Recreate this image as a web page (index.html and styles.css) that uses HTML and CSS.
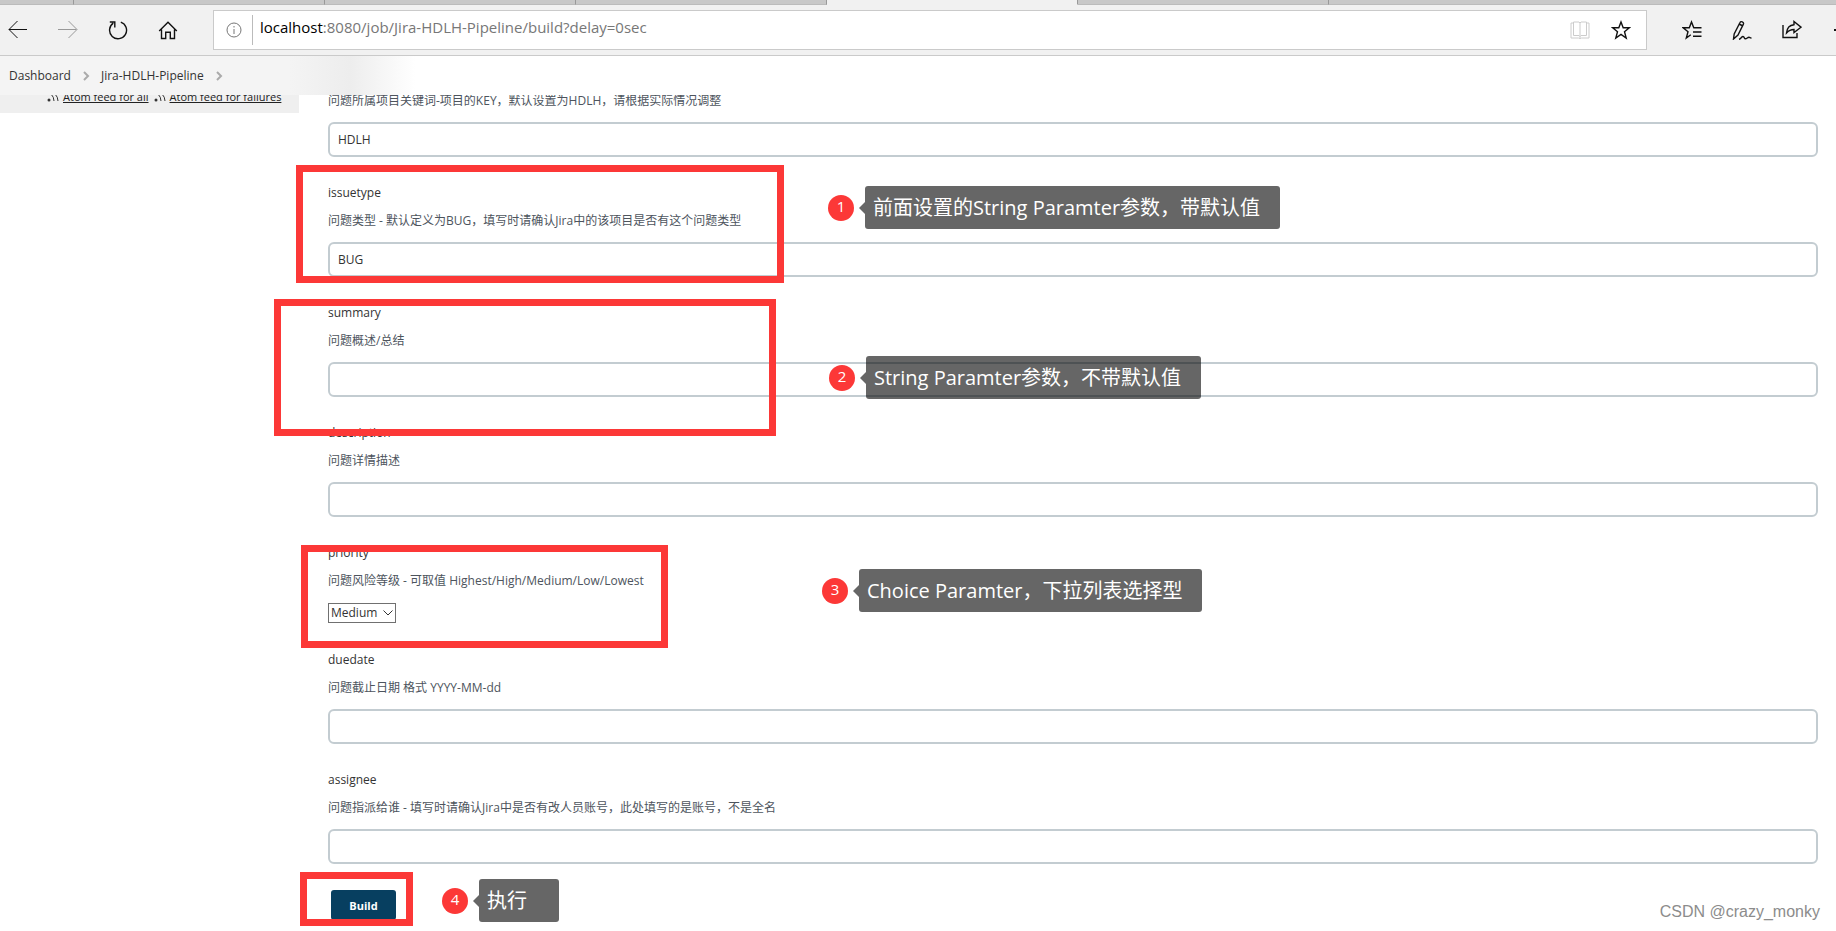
FILE: index.html
```html
<!DOCTYPE html>
<html lang="zh-CN">
<head>
  <meta charset="utf-8">
  <title>Jira-HDLH-Pipeline</title>
  <link rel="stylesheet" href="styles.css">
</head>
<body>

<div class="tabs">
  <div class="tab first"></div>
  <div class="tab"></div>
  <div class="tab"></div>
  <div class="tab"></div>
  <div class="tab active"></div>
  <div class="tab"></div>
  <div class="tab last"></div>
</div>

<div class="toolbar">
  <div class="tools">
    <button aria-label="Back"><svg viewBox="0 0 20 20"><path d="M19 9.5H1M9.5 1L1 9.5 9.500 18"/></svg></button>
    <button class="muted" aria-label="Forward"><svg viewBox="0 0 20 20"><path d="M0 9.5h18.5M10.5 1L19 9.5 10.5 18"/></svg></button>
    <button aria-label="Refresh"><svg viewBox="0 0 20 20"><path class="bold" d="M12.8 2.2A8.5 8.5 0 1 1 5.3 3.2M1.8 2h5v5.500"/></svg></button>
    <button aria-label="Home"><svg viewBox="0 0 20 20"><path class="bold" d="M1.200 11L10 2.200l8.800 8.800M3.500 9.500v9h4.200v-6.300h4.600v6.300h4.200v-9"/></svg></button>
  </div>
  <div class="address">
    <svg class="info" viewBox="0 0 16 16"><circle cx="8" cy="8" r="7"/><path d="M8 7v5M8 4v1.500"/></svg>
    <div class="url" role="textbox" contenteditable="true" spellcheck="false" aria-label="Address"><span class="host">localhost</span>:8080/job/Jira-HDLH-Pipeline/build?delay=0sec</div>
    <button class="reader" aria-label="Reading view"><svg viewBox="0 0 20 20"><path d="M1 3h2.500V2H9l1 1 1-1h5.500v1H19v15h-7.500l-1.500.6-1.500-.6H1zM3.500 3v12.500H9l1 1 1-1h5.500V3M10 3v15"/></svg></button>
    <button aria-label="Favorite"><svg viewBox="0 0 20 20"><path class="bold" d="M10 2l2.200 5.800h6.100l-4.800 3.900 1.700 6.300L10 14.400 4.800 18l1.700-6.300-4.800-3.900h6.100z"/></svg></button>
  </div>
  <div class="tools right">
    <button aria-label="Hub"><svg viewBox="0 0 20 20"><path class="bold" d="M12 8l-.2-.2L9.500 2 7.300 7.800H1.200L6 11.700 4.300 18l4.500-3.300M11.500 7.800h8M11 12h8.500M11 16.200h8.500"/></svg></button>
    <button aria-label="Notes"><svg viewBox="0 0 20 20"><path class="bold" d="M1.500 19l.7-5L8 2.500c.8-1.800 4.200-.4 3.400 1.600L6 15zM7 4l4 2M1.500 19L6 15M7 19.300c2-.5 2.500-2.800 4-2.800 1.700 0 .8 2.300 2.500 2.300 1.500 0 2-1.500 3.500-1.500 1 0 1 .8 2.500.6"/></svg></button>
    <button aria-label="Share"><svg viewBox="0 0 20 20"><path class="bold" d="M1 5v12.500h14V13M12 1.500L19 7.200l-7 5.300V9.500c-3.500 0-5.300 1-7.500 3.500C5 8 7.500 5 12 4.700z"/></svg></button>
    <button aria-label="More"><svg viewBox="0 0 20 20"><path class="dots" d="M2 9h2v2H2zM9 9h2v2H9zM16 9h2v2h-2z"/></svg></button>
  </div>
</div>

<nav class="breadcrumbs">
  <a href="#">Dashboard</a>
  <svg viewBox="0 0 8 10"><path d="M2 1l4 4-4 4"/></svg>
  <a href="#">Jira-HDLH-Pipeline</a>
  <svg viewBox="0 0 8 10"><path d="M2 1l4 4-4 4"/></svg>
</nav>

<div class="content">
  <aside class="sidebar">
    <div class="feeds">
      <svg viewBox="0 0 12 12"><circle cx="2" cy="9" r="1.500"/><path d="M4 3q3 3 3 7M8 3q3 3 3 7"/></svg>
      <a href="#">Atom feed for all</a>
      <svg viewBox="0 0 12 12"><circle cx="2" cy="9" r="1.500"/><path d="M4 3q3 3 3 7M8 3q3 3 3 7"/></svg>
      <a href="#">Atom feed for failures</a>
    </div>
  </aside>

  <main class="params">
    <form>
      <div class="field">
        <p class="help" id="help-project">问题所属项目关键词-项目的KEY，默认设置为HDLH，请根据实际情况调整</p>
        <input type="text" value="HDLH" aria-labelledby="help-project">
      </div>
      <div class="field">
        <label for="issuetype">issuetype</label>
        <p class="help">问题类型 - 默认定义为BUG，填写时请确认Jira中的该项目是否有这个问题类型</p>
        <input type="text" id="issuetype" value="BUG">
      </div>
      <div class="field">
        <label for="summary">summary</label>
        <p class="help">问题概述/总结</p>
        <input type="text" id="summary">
      </div>
      <div class="field">
        <label for="description">description</label>
        <p class="help">问题详情描述</p>
        <input type="text" id="description">
      </div>
      <div class="field">
        <label for="priority">priority</label>
        <p class="help">问题风险等级 - 可取值 Highest/High/Medium/Low/Lowest</p>
        <div class="select">
          <select id="priority">
            <option>Highest</option>
            <option>High</option>
            <option selected>Medium</option>
            <option>Low</option>
            <option>Lowest</option>
          </select>
          <svg viewBox="0 0 10 6"><path d="M.5.5L5 5 9.500.5"/></svg>
        </div>
      </div>
      <div class="field">
        <label for="duedate">duedate</label>
        <p class="help">问题截止日期 格式 YYYY-MM-dd</p>
        <input type="text" id="duedate">
      </div>
      <div class="field">
        <label for="assignee">assignee</label>
        <p class="help">问题指派给谁 - 填写时请确认Jira中是否有改人员账号，此处填写的是账号，不是全名</p>
        <input type="text" id="assignee">
      </div>
      <button type="submit" class="build">Build</button>
    </form>
  </main>
</div>

<!-- annotations -->
<div class="frame frame-1"></div>
<div class="frame frame-2"></div>
<div class="frame frame-3"></div>
<div class="frame frame-4"></div>

<div class="note note-1"><span class="num">1</span><span class="tip">前面设置的String Paramter参数，带默认值</span></div>
<div class="note note-2"><span class="num">2</span><span class="tip">String Paramter参数，不带默认值</span></div>
<div class="note note-3"><span class="num">3</span><span class="tip">Choice Paramter，下拉列表选择型</span></div>
<div class="note note-4"><span class="num">4</span><span class="tip">执行</span></div>

<div class="watermark">CSDN @crazy_monky</div>

</body>
</html>
```
FILE: styles.css
```css
:root {
  --red: #fc3837;
  --chrome: #f1f1f1;
  --line: #cacaca;
  --field: #c3ccd1;
  --text: #333;
}

* {
  box-sizing: border-box;
}

body {
  margin: 0;
  position: relative;
  min-height: 100vh;
  overflow: hidden;
  background: #fff;
  color: var(--text);
  font: 12px/20px "Open Sans", "Noto Sans CJK SC", sans-serif;
}

button {
  padding: 0;
  border: none;
  background: none;
}

svg {
  display: block;
  flex: none;
  fill: none;
  stroke: currentColor;
}

/* browser chrome */
.tabs {
  display: flex;
  height: 5px;
  background: #c8c8c8;
}

.tab {
  width: 251px;
  border-right: 1px solid #999;
  border-bottom: 1px solid #bbb;
}

.tab.first {
  width: 74px;
}

.tab.active {
  background: var(--chrome);
  border-bottom-color: var(--chrome);
}

.tab.last {
  flex: 1;
  border-right: none;
}

.toolbar {
  display: flex;
  align-items: center;
  height: 51px;
  padding-left: 8px;
  background: var(--chrome);
  border-bottom: 1px solid var(--line);
}

.tools {
  display: flex;
  gap: 30px;
}

.tools.right {
  width: 154px;
  overflow: hidden;
}

.toolbar button {
  flex: none;
  width: 20px;
  height: 20px;
  color: #111;
}

.toolbar button svg {
  width: 20px;
  height: 20px;
}

.toolbar .bold {
  stroke-width: 1.4;
}

.toolbar .dots {
  fill: #111;
  stroke: none;
}

.toolbar .muted {
  color: #999;
}

.toolbar .reader {
  margin-right: 21px;
  color: #ccc;
}

.address {
  flex: 1;
  display: flex;
  align-items: center;
  height: 40px;
  margin: 0 35px;
  padding: 0 15px 0 12px;
  background: #fff;
  border: 1px solid var(--line);
}

.info {
  width: 16px;
  height: 16px;
  color: #777;
}

.url {
  flex: 1;
  height: 30px;
  margin-left: 10px;
  padding-left: 7px;
  border-left: 1px solid #bbb;
  outline: none;
  color: #777;
  font-size: 15px;
  line-height: 24px;
}

.host {
  color: #000;
}

.breadcrumbs {
  position: relative;
  z-index: 1;
  display: flex;
  align-items: center;
  height: 39px;
  padding-left: 9px;
  background: linear-gradient(to right, #f4f4f4 290px, #ededed 350px, #fff 415px);
}

.breadcrumbs a {
  color: var(--text);
  text-decoration: none;
}

.breadcrumbs svg {
  width: 8px;
  height: 10px;
  margin: 0 11px;
  color: #aaa;
  stroke-width: 2;
}

.content {
  display: flex;
  align-items: flex-start;
  margin-top: -9px;
}

.sidebar {
  flex: none;
  width: 299px;
  height: 27px;
  background: #efefef;
}

.feeds {
  display: flex;
  align-items: center;
  padding: 1px 0 0 47px;
}

.feeds svg {
  width: 12px;
  height: 12px;
  margin-right: 4px;
}

.feeds circle {
  fill: currentColor;
  stroke: none;
}

.feeds a {
  margin-right: 5px;
  color: #222;
  font-size: 11px;
}

/* build parameters */
.params {
  flex: 1;
  padding: 5px 18px 0 29px;
}

.field {
  margin-bottom: 26px;
}

.field label {
  display: block;
  margin-bottom: 8px;
}

.help {
  margin: 0 0 11px;
  color: #4d545d;
}

.field input {
  display: block;
  width: 100%;
  height: 35px;
  padding: 0 8px;
  border: 2px solid var(--field);
  border-radius: 6px;
  background: #fff;
  color: var(--text);
  font: inherit;
}

.select {
  position: relative;
  width: 68px;
  padding: 1px 0;
}

.select select {
  display: block;
  width: 100%;
  height: 20px;
  padding: 0 2px;
  border: 1px solid #707070;
  border-radius: 0;
  background: #fff;
  color: var(--text);
  font: inherit;
  line-height: 18px;
  appearance: none;
}

.select svg {
  position: absolute;
  top: 8px;
  right: 3px;
  width: 10px;
  height: 6px;
  pointer-events: none;
}

.build {
  display: block;
  width: 65px;
  height: 30px;
  margin-left: 3px;
  padding-top: 2px;
  border-radius: 3px;
  background: #073f60;
  color: #fff;
  font: bold 11px/20px "Open Sans", sans-serif;
}

/* annotations */
.frame {
  position: absolute;
  z-index: 2;
  border: 7px solid var(--red);
}

.frame-1 {
  left: 296px;
  top: 165px;
  width: 488px;
  height: 118px;
}

.frame-2 {
  left: 274px;
  top: 299px;
  width: 502px;
  height: 137px;
}

.frame-3 {
  left: 301px;
  top: 545px;
  width: 367px;
  height: 103px;
}

.frame-4 {
  left: 300px;
  top: 872px;
  width: 113px;
  height: 54px;
}

.note {
  position: absolute;
  z-index: 3;
  display: flex;
  align-items: center;
  gap: 11px;
  color: #fff;
}

.note-1 {
  left: 828px;
  top: 186px;
  width: 452px;
}

.note-2 {
  left: 829px;
  top: 356px;
  width: 372px;
}

.note-3 {
  left: 822px;
  top: 569px;
  width: 380px;
}

.note-4 {
  left: 442px;
  top: 879px;
  width: 117px;
}

.num {
  width: 26px;
  height: 26px;
  border-radius: 50%;
  background: var(--red);
  font-size: 15px;
  line-height: 23px;
  text-align: center;
}

.tip {
  position: relative;
  flex: 1;
  height: 43px;
  padding-left: 8px;
  border-radius: 3px;
  background: rgba(0, 0, 0, 0.6);
  font-size: 20px;
  line-height: 43px;
  white-space: nowrap;
}

.tip::before {
  content: "";
  position: absolute;
  right: 100%;
  top: 16px;
  border: 6px solid transparent;
  border-right-color: rgba(0, 0, 0, 0.6);
  border-left: none;
}

.watermark {
  position: absolute;
  right: 16px;
  bottom: 9px;
  color: #8c8c8c;
  font: 16px/20px "Liberation Sans", sans-serif;
}
```
